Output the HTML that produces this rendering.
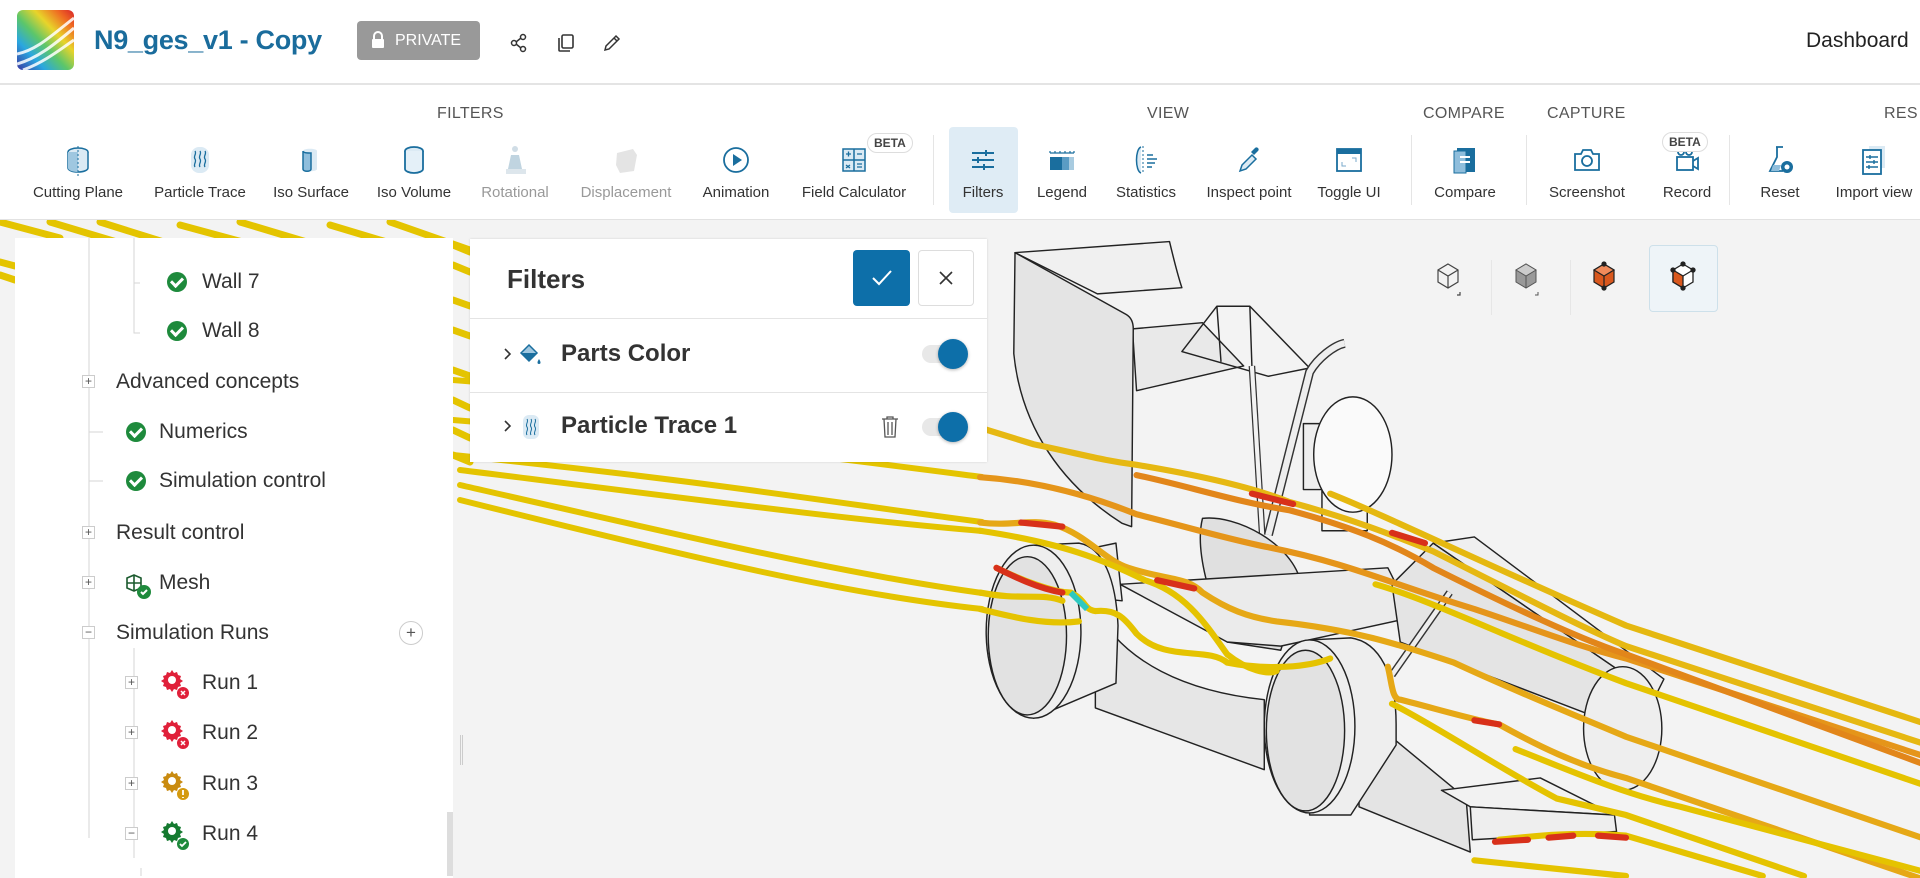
<!DOCTYPE html>
<html><head><meta charset="utf-8">
<style>
*{box-sizing:border-box;margin:0;padding:0}
body{width:1920px;height:876px;overflow:hidden;background:#f3f3f3;font-family:"Liberation Sans",sans-serif;color:#333;position:relative}
.hdr{position:absolute;left:0;top:0;width:1920px;height:85px;background:#fff;border-bottom:2px solid #e4e4e4}
.tb{position:absolute;left:0;top:85px;width:1920px;height:135px;background:#fff;border-bottom:1px solid #e2e2e2}
.sec{position:absolute;top:105px;font-size:16px;color:#555;letter-spacing:.3px}
.it{position:absolute;top:143px;width:120px;margin-left:-60px;text-align:center;font-size:15px;color:#333}
.it svg{display:block;margin:0 auto 7px;width:34px;height:34px}
.it.dis{color:#999}
.sep{position:absolute;top:135px;width:1px;height:70px;background:#e5e5e5}
.beta{position:absolute;font-size:12px;font-weight:bold;color:#444;border:1px solid #ddd;border-radius:10px;padding:2px 6px;background:#fff}
.abs{position:absolute}
.tree{position:absolute;left:15px;top:238px;width:438px;height:640px;background:#fff}
.row{position:absolute;font-size:21px;color:#333;white-space:nowrap;line-height:24px}
.pb{position:absolute;width:13px;height:13px;border:1px solid #ccc;background:#fff;font-size:12px;line-height:11px;text-align:center;color:#555}
.chk{position:absolute;width:20px;height:20px;border-radius:50%;background:#1e8a3c}
.chk:after{content:"";position:absolute;left:6px;top:3px;width:5px;height:9px;border:solid #fff;border-width:0 3px 3px 0;transform:rotate(45deg)}
.fp{position:absolute;left:470px;top:239px;width:517px;height:223px;background:#fff;box-shadow:0 0 2px rgba(0,0,0,.15)}
.tog{position:absolute;width:44px;height:18px;border-radius:9px;background:#e8e8e8}
.tog:after{content:"";position:absolute;right:-2px;top:-6px;width:30px;height:30px;border-radius:50%;background:#0d6fa9;box-shadow:0 1px 3px rgba(0,0,0,.3)}
</style></head><body>

<!-- page-coordinate streamlines -->
<svg class="abs" style="left:0;top:220px" width="1920" height="656" viewBox="0 220 1920 656">
<g stroke="#e4c400" stroke-width="7" fill="none" stroke-linecap="round">
<path d="M0 222 L60 238"/><path d="M50 222 L120 243"/><path d="M100 222 L170 244"/><path d="M180 225 L250 244"/><path d="M240 222 L320 246"/><path d="M330 225 L400 246"/><path d="M390 222 L470 250"/><path d="M0 262 L15 266"/><path d="M0 275 L15 280"/>
<path d="M453 245 L470 252"/><path d="M453 265 L470 272"/><path d="M453 300 L470 306"/><path d="M453 330 L470 336"/><path d="M453 370 L470 376"/><path d="M453 400 L470 408"/><path d="M453 430 L470 438"/><path d="M453 455 L470 462"/>
</g>
<g fill="none" stroke-width="6" stroke-linecap="round" stroke="#e4c400">
<path d="M453 380 C700 400 850 415 982 428"/>
<path d="M453 420 C700 440 850 460 982 477"/>
<path d="M453 455 C700 480 850 505 982 522"/>
<path d="M460 470 C700 500 850 520 982 531"/>
<path d="M460 485 C700 540 850 575 982 593"/>
<path d="M460 500 C700 560 850 595 982 609"/>
</g>
</svg>

<!-- car region, zoom coords (scale 2.427) -->
<svg class="abs" style="left:980px;top:230px;overflow:visible" width="646" height="646" viewBox="0 0 1568 1568">
<g stroke="#222" stroke-width="3.5" fill="#ececec" stroke-linejoin="round">
<path d="M85 55 L460 28 C470 70 480 110 490 140 L285 155 Z" fill="#f0f0f0"/>
<path d="M370 240 L540 225 L640 330 L380 390 Z" fill="#e9e9e9"/>
<path d="M85 55 L355 205 Q372 215 372 240 L368 720 L345 712 C200 620 100 480 82 300 Z" fill="#e4e4e4"/>
<path d="M490 295 L575 185 L655 185 L800 335 L700 355 Z M575 185 L585 320 M655 185 L660 330" fill="none"/>
<path d="M660 330 L685 740" fill="none" stroke="#333" stroke-width="16"/>
<path d="M660 330 L685 740" fill="none" stroke="#f2f2f2" stroke-width="10"/>
<path d="M700 740 L800 345 C820 310 860 280 885 275" fill="none" stroke="#333" stroke-width="22"/>
<path d="M700 740 L800 345 C820 310 860 280 885 275" fill="none" stroke="#eeeeee" stroke-width="15"/>
<rect x="785" y="470" width="45" height="160" fill="#eee"/>
<rect x="830" y="630" width="110" height="100" fill="#f4f4f4"/>
<ellipse cx="905" cy="545" rx="95" ry="140" fill="#fafafa"/>
<path d="M540 700 C620 690 760 760 780 860 L730 1020 L600 1000 C560 900 520 780 540 700Z" fill="#e0e0e0"/>
<path d="M340 860 L990 820 L1050 940 L730 1010 L600 1000 Z" fill="#ebebeb"/>
<path d="M1000 860 L1100 760 L1640 1130 L1620 1230 L1020 1000 Z" fill="#e4e4e4"/>
<path d="M1100 760 L1200 745 L1660 1090 L1640 1130 Z" fill="#efefef"/>
<ellipse cx="1560" cy="1210" rx="95" ry="150" fill="#eeeeee"/>
<path d="M235 780 L330 760 L345 900 L250 890 Z" fill="#eeeeee"/>
<path d="M280 920 C350 1050 500 1120 690 1140 L690 1310 L280 1160 Z" fill="#e6e6e6"/>
<path d="M130 765 L240 760 C300 770 330 850 335 960 L330 1100 L130 1185 Z" fill="#eeeeee"/>
<ellipse cx="130" cy="975" rx="115" ry="210" fill="#eeeeee"/>
<ellipse cx="115" cy="985" rx="95" ry="192" fill="#e2e2e2"/>
<path d="M920 1260 L1010 1240 L1180 1380 L1190 1510 L920 1400 Z" fill="#e4e4e4"/>
<path d="M1120 1360 L1360 1330 L1540 1420 L1190 1400 Z" fill="#f2f2f2"/>
<path d="M1190 1400 L1540 1420 L1545 1460 L1195 1480 Z" fill="#eeeeee"/>
<path d="M800 995 L900 990 C970 1000 1010 1080 1010 1200 L1010 1250 L900 1420 L800 1420 Z" fill="#eeeeee"/>
<ellipse cx="800" cy="1205" rx="110" ry="210" fill="#eeeeee"/>
<ellipse cx="790" cy="1215" rx="95" ry="195" fill="#e2e2e2"/>
<path d="M1000 1080 L1140 880" stroke="#333" stroke-width="18" fill="none"/>
<path d="M1000 1080 L1140 880" stroke="#eee" stroke-width="11" fill="none"/>
</g>
<g fill="none" stroke-width="15" stroke-linecap="round">
<path d="M0 480 L130 520 C250 545 300 560 380 570 C500 590 650 620 750 660 C900 700 1000 740 1100 780 C1300 880 1450 960 1568 1010 L2300 1250" stroke="#e6b812"/>
<path d="M0 600 C150 610 280 650 380 690 C500 720 600 750 700 770 C900 810 1000 860 1200 920 C1350 970 1450 1010 1568 1040 L2300 1280" stroke="#e5951a"/>
<path d="M380 595 C500 620 620 660 750 680 C900 720 1000 760 1100 820 C1300 920 1450 990 1568 1030 L2300 1300" stroke="#e2861a"/>
<path d="M0 710 C80 720 120 700 180 715 C260 740 300 800 360 820 C450 850 500 840 540 880 C600 920 650 940 720 950 C900 970 1000 1000 1150 1050 C1300 1120 1450 1180 1568 1230 L2300 1480" stroke="#e6a816"/>
<path d="M40 820 C100 850 180 880 220 880 C260 900 250 920 280 925 C330 920 350 940 380 980 C450 1050 550 1010 600 1050 C700 1070 800 1060 850 1040" stroke="#e5c300"/>
<path d="M0 730 C200 760 300 800 400 850 C500 880 550 960 600 1030 C650 1070 700 1080 720 1070" stroke="#e5c300"/>
<path d="M990 1060 C1000 1100 1000 1140 1020 1140 C1100 1160 1200 1190 1260 1200 C1350 1250 1450 1300 1568 1330 L2300 1580" stroke="#e6a816"/>
<path d="M1000 1150 C1100 1200 1250 1300 1400 1380 L1568 1420 L2000 1568" stroke="#e5c300"/>
<path d="M1260 1480 C1350 1470 1450 1460 1568 1470 L1900 1568" stroke="#e5c300"/>
<path d="M1200 1530 L1568 1568" stroke="#e5c300"/>
<path d="M960 860 C1100 900 1300 1000 1568 1100 L2300 1350" stroke="#e5c300"/>
<path d="M850 640 C1000 700 1200 800 1568 960 L2300 1200" stroke="#e5b810"/>
<path d="M1300 1260 C1450 1320 1568 1370 1700 1400 L2300 1560" stroke="#e5c300"/>
<path d="M0 880 C100 900 150 880 200 900" stroke="#e5c300"/>
<path d="M0 920 C80 940 160 960 240 950" stroke="#e5c300"/>
</g>
<g fill="none" stroke-width="15" stroke-linecap="round" stroke="#d8301a">
<path d="M40 820 C80 840 140 870 200 880"/><path d="M660 640 L760 665"/><path d="M1000 735 L1080 760"/>
<path d="M1250 1485 L1330 1480"/><path d="M1380 1475 L1440 1470"/><path d="M1500 1470 L1568 1475"/>
<path d="M100 710 L200 720"/><path d="M430 850 L520 870"/><path d="M1200 1190 L1260 1200"/>
</g>
<path d="M220 880 L260 920" stroke="#2ec8c0" stroke-width="14" fill="none"/>
</svg>

<!-- header -->
<div class="hdr"></div>
<svg class="abs" style="left:17px;top:10px" width="57" height="60" viewBox="0 0 57 60">
<defs><linearGradient id="lg" x1="0" y1="1" x2="1" y2="0"><stop offset="0" stop-color="#3a37a0"/><stop offset=".25" stop-color="#2aa7e0"/><stop offset=".45" stop-color="#5cc66a"/><stop offset=".65" stop-color="#e8d42a"/><stop offset=".85" stop-color="#ef6a22"/><stop offset="1" stop-color="#d8232a"/></linearGradient></defs>
<rect width="57" height="60" rx="6" fill="url(#lg)"/>
<path d="M0 44 C20 40 35 25 57 8 M0 54 C22 48 40 32 57 18 M6 60 C28 52 45 38 57 30" stroke="#fff" stroke-width="3" fill="none" opacity=".85"/>
</svg>
<div class="abs" style="left:94px;top:25px;font-size:27px;font-weight:bold;color:#1a6c9c;letter-spacing:-0.3px">N9_ges_v1 - Copy</div>
<div class="abs" style="left:357px;top:21px;width:123px;height:39px;background:#999;border-radius:4px;color:#fff;font-size:16px;line-height:39px;padding-left:38px">PRIVATE</div>
<svg class="abs" style="left:370px;top:31px" width="16" height="18" viewBox="0 0 16 18"><path d="M4 8V5a4 4 0 0 1 8 0v3" stroke="#fff" stroke-width="2" fill="none"/><rect x="2" y="8" width="12" height="9" rx="1" fill="#fff"/></svg>
<svg class="abs" style="left:509px;top:33px" width="20" height="20" viewBox="0 0 20 20" fill="none" stroke="#333" stroke-width="1.5"><circle cx="14" cy="4" r="2.5"/><circle cx="5" cy="10" r="2.5"/><circle cx="14" cy="16" r="2.5"/><path d="M7 9l5-4M7 11l5 4"/></svg>
<svg class="abs" style="left:556px;top:33px" width="20" height="20" viewBox="0 0 20 20" fill="none" stroke="#333" stroke-width="1.6"><rect x="6" y="2" width="11" height="13" rx="1.5"/><path d="M3 5v12a1 1 0 0 0 1 1h10"/></svg>
<svg class="abs" style="left:602px;top:33px" width="20" height="20" viewBox="0 0 20 20" fill="none" stroke="#333" stroke-width="1.5"><path d="M3 17l1-4L14 3l3 3L7 16z M12 5l3 3"/></svg>
<div class="abs" style="left:1806px;top:29px;font-size:21px;color:#222">Dashboard</div>

<!-- toolbar -->
<div class="tb"></div>
<div class="sec" style="left:437px">FILTERS</div>
<div class="sec" style="left:1147px">VIEW</div>
<div class="sec" style="left:1423px">COMPARE</div>
<div class="sec" style="left:1547px">CAPTURE</div>
<div class="sec" style="left:1884px">RES</div>
<div class="abs" style="left:949px;top:127px;width:69px;height:86px;background:#dfecf5;border-radius:4px"></div>
<div class="sep" style="left:933px"></div><div class="sep" style="left:1411px"></div><div class="sep" style="left:1526px"></div><div class="sep" style="left:1729px"></div>

<div class="it" style="left:78px"><svg viewBox="0 0 34 34"><ellipse cx="17" cy="9" rx="10" ry="4" fill="#dbeaf4" stroke="#1a6e9e" stroke-width="1.5"/><path d="M7 9v16c0 2 4 4 10 4s10-2 10-4V9" fill="#dbeaf4" stroke="#1a6e9e" stroke-width="1.5"/><path d="M7 9v16c0 2 4 4 10 4V9" fill="#9fc7e0"/><path d="M17 3v30" stroke="#1a6e9e" stroke-dasharray="2 2"/></svg>Cutting Plane</div>
<div class="it" style="left:200px"><svg viewBox="0 0 34 34"><rect x="8" y="4" width="18" height="26" rx="8" fill="#dbeaf4"/><path d="M12 8c2 3-2 5 0 8s-2 5 0 8M17 8c2 3-2 5 0 8s-2 5 0 8M22 8c2 3-2 5 0 8s-2 5 0 8" stroke="#1a6e9e" fill="none" stroke-width="1.3"/></svg>Particle Trace</div>
<div class="it" style="left:311px"><svg viewBox="0 0 34 34"><path d="M9 8c0-3 14-3 14 0v18c0 3-14 3-14 0z" fill="#dbeaf4"/><path d="M9 8v18c0 3 8 3 8 0V10c-3 0-8 0-8-2z" fill="#8fbedc" stroke="#1a6e9e" stroke-width="1.5"/></svg>Iso Surface</div>
<div class="it" style="left:414px"><svg viewBox="0 0 34 34"><ellipse cx="17" cy="8" rx="9" ry="4" fill="#dbeaf4" stroke="#1a6e9e" stroke-width="1.8"/><path d="M8 8v18c0 2 4 4 9 4s9-2 9-4V8" fill="#e4f0f8" stroke="#1a6e9e" stroke-width="1.8"/></svg>Iso Volume</div>
<div class="it dis" style="left:515px"><svg viewBox="0 0 34 34"><circle cx="17" cy="6" r="3" fill="#d0dde6"/><path d="M10 26l3-14h8l3 14z" fill="#c0d4e0"/><rect x="8" y="26" width="20" height="5" fill="#dde6ec"/></svg>Rotational</div>
<div class="it dis" style="left:626px"><svg viewBox="0 0 34 34"><path d="M8 10l16-4 4 6-3 16-14 2-4-8z" fill="#e4e4e4"/></svg>Displacement</div>
<div class="it" style="left:736px"><svg viewBox="0 0 34 34"><circle cx="17" cy="17" r="12" fill="#fff" stroke="#1a6e9e" stroke-width="1.8"/><path d="M14 11l9 6-9 6z" fill="#1a6e9e"/></svg>Animation</div>
<div class="it" style="left:854px"><svg viewBox="0 0 34 34"><rect x="6" y="6" width="22" height="22" fill="#dbeaf4" stroke="#1a6e9e" stroke-width="1.5"/><path d="M17 6v22M6 17h22" stroke="#1a6e9e" stroke-width="1.5"/><path d="M9 11h5M11.5 8.5v5M20 11h5M9 22l4 3M13 22l-4 3M20 21h5M20 24h5" stroke="#1a6e9e" stroke-width="1.3"/></svg>Field Calculator</div>
<div class="beta" style="left:867px;top:133px">BETA</div>
<div class="it" style="left:983px"><svg viewBox="0 0 34 34" stroke="#1a6e9e" stroke-width="2"><path d="M6 10h22M6 17h22M6 24h22"/><path d="M20 7v6M12 14v6M18 21v6"/></svg>Filters</div>
<div class="it" style="left:1062px"><svg viewBox="0 0 34 34"><path d="M5 10h24M5 8v2M10 8v2M15 8v2M20 8v2M25 8v2M29 8v2" stroke="#1a6e9e" stroke-width="1.2"/><rect x="5" y="14" width="24" height="13" fill="#1a6e9e"/><rect x="17" y="14" width="12" height="13" fill="#5a9cc4"/><rect x="24" y="14" width="5" height="13" fill="#a8cbe0"/></svg>Legend</div>
<div class="it" style="left:1146px"><svg viewBox="0 0 34 34"><path d="M12 4c-6 2-6 24 0 26" fill="#dbeaf4" stroke="#1a6e9e" stroke-width="1.5"/><path d="M14 3v28" stroke="#1a6e9e" stroke-dasharray="2 2"/><path d="M18 12h6M18 16h10M18 20h8M18 24h5" stroke="#1a6e9e" stroke-width="1.5"/></svg>Statistics</div>
<div class="it" style="left:1249px"><svg viewBox="0 0 34 34"><path d="M8 28l2-6 10-10 4 4-10 10z" fill="#dbeaf4" stroke="#1a6e9e" stroke-width="1.5"/><path d="M19 9l4-4c2-2 5 1 3 3l-4 4z" fill="#1a6e9e"/></svg>Inspect point</div>
<div class="it" style="left:1349px"><svg viewBox="0 0 34 34"><rect x="5" y="6" width="24" height="22" fill="#fff" stroke="#1a6e9e" stroke-width="1.8"/><rect x="5" y="6" width="24" height="5" fill="#1a6e9e"/><path d="M10 19v4h4M24 19v-4h-4" stroke="#7aaacb" fill="none"/></svg>Toggle UI</div>
<div class="it" style="left:1465px"><svg viewBox="0 0 34 34"><rect x="9" y="5" width="18" height="24" fill="#1a6e9e"/><rect x="6" y="8" width="12" height="22" fill="#8fbedc" stroke="#1a6e9e"/><path d="M12 14h10M12 19h10" stroke="#fff" stroke-width="2"/></svg>Compare</div>
<div class="it" style="left:1587px"><svg viewBox="0 0 34 34" fill="none" stroke="#1a6e9e" stroke-width="1.8"><path d="M5 11h6l2-4h8l2 4h6v16H5z"/><circle cx="17" cy="18" r="5"/></svg>Screenshot</div>
<div class="it" style="left:1687px"><svg viewBox="0 0 34 34" fill="none" stroke="#1a6e9e" stroke-width="1.8"><rect x="7" y="14" width="16" height="13"/><path d="M23 18l5-3v11l-5-3"/><circle cx="11" cy="9" r="3"/><circle cx="19" cy="9" r="3"/></svg>Record</div>
<div class="beta" style="left:1662px;top:132px">BETA</div>
<div class="it" style="left:1780px"><svg viewBox="0 0 34 34"><path d="M13 4h7M14 4v10l-7 14h13" fill="none" stroke="#1a6e9e" stroke-width="1.8"/><path d="M10 22h8l-2 6H8z" fill="#8fbedc"/><circle cx="24" cy="24" r="6" fill="#1a6e9e"/><circle cx="24" cy="24" r="2.5" fill="#fff"/></svg>Reset</div>
<div class="it" style="left:1874px"><svg viewBox="0 0 34 34"><rect x="12" y="3" width="16" height="22" fill="#dbeaf4"/><rect x="6" y="7" width="18" height="24" fill="#fff" stroke="#1a6e9e" stroke-width="1.8"/><path d="M9 14h12M9 19h12M9 24h12M13 12v4M17 17v4M12 22v4" stroke="#1a6e9e" stroke-width="1.4"/></svg>Import view</div>

<!-- tree -->
<div class="tree"></div>
<svg class="abs" style="left:15px;top:238px" width="438" height="638">
<g stroke="#d6d6d6" stroke-width="1" fill="none">
<path d="M74 0V600"/><path d="M119 0V95 H125"/><path d="M119 45H125"/>
<path d="M74 194H88M74 243H88"/><path d="M119 410V620"/><path d="M126 630V640"/>
</g>
<rect x="432" y="574" width="6" height="64" fill="#ddd"/>
</svg>
<div class="chk" style="left:167px;top:218px;clip-path:inset(20px 0 0 0)"></div>
<div class="chk" style="left:167px;top:272px"></div><div class="row" style="left:202px;top:270px">Wall 7</div>
<div class="chk" style="left:167px;top:321px"></div><div class="row" style="left:202px;top:319px">Wall 8</div>
<div class="pb" style="left:82px;top:375px">+</div><div class="row" style="left:116px;top:370px">Advanced concepts</div>
<div class="chk" style="left:126px;top:422px"></div><div class="row" style="left:159px;top:420px">Numerics</div>
<div class="chk" style="left:126px;top:471px"></div><div class="row" style="left:159px;top:469px">Simulation control</div>
<div class="pb" style="left:82px;top:526px">+</div><div class="row" style="left:116px;top:521px">Result control</div>
<div class="pb" style="left:82px;top:576px">+</div>
<svg class="abs" style="left:122px;top:570px" width="32" height="32" viewBox="0 0 32 32"><path d="M5 8l7-3 7 3v10l-7 3-7-3z M12 5v16 M5 13h14" fill="none" stroke="#1b5a2e" stroke-width="1.6"/><circle cx="22" cy="22" r="7" fill="#1e8a3c"/><path d="M19 22l2 2 4-4" stroke="#fff" stroke-width="2" fill="none"/></svg>
<div class="row" style="left:159px;top:571px">Mesh</div>
<div class="pb" style="left:82px;top:626px">−</div><div class="row" style="left:116px;top:621px">Simulation Runs</div>
<div class="abs" style="left:399px;top:621px;width:24px;height:24px;border:1px solid #ccc;border-radius:50%;text-align:center;line-height:21px;font-size:17px;color:#555">+</div>
<svg width="0" height="0" style="position:absolute"><defs><path id="gear" d="M12 2l2 3 3-1 1 3 3 1-1 3 3 2-3 2 1 3-3 1-1 3-3-1-2 3-2-3-3 1-1-3-3-1 1-3-3-2 3-2-1-3 3-1 1-3 3 1z"/></defs></svg>
<div class="pb" style="left:125px;top:676px">+</div>
<svg class="abs" style="left:160px;top:668px" width="36" height="36" viewBox="0 0 36 36"><use href="#gear" fill="#e0203a"/><circle cx="12" cy="12" r="4" fill="#fff"/><circle cx="23" cy="25" r="6" fill="#e0203a"/><path d="M21 23l4 4M25 23l-4 4" stroke="#fff" stroke-width="1.5"/></svg>
<div class="row" style="left:202px;top:671px">Run 1</div>
<div class="pb" style="left:125px;top:726px">+</div>
<svg class="abs" style="left:160px;top:718px" width="36" height="36" viewBox="0 0 36 36"><use href="#gear" fill="#e0203a"/><circle cx="12" cy="12" r="4" fill="#fff"/><circle cx="23" cy="25" r="6" fill="#e0203a"/><path d="M21 23l4 4M25 23l-4 4" stroke="#fff" stroke-width="1.5"/></svg>
<div class="row" style="left:202px;top:721px">Run 2</div>
<div class="pb" style="left:125px;top:777px">+</div>
<svg class="abs" style="left:160px;top:769px" width="36" height="36" viewBox="0 0 36 36"><use href="#gear" fill="#c98b10"/><circle cx="12" cy="12" r="4" fill="#fff"/><circle cx="23" cy="25" r="6" fill="#d49a10"/><path d="M23 21v5M23 28v1" stroke="#fff" stroke-width="1.8"/></svg>
<div class="row" style="left:202px;top:772px">Run 3</div>
<div class="pb" style="left:125px;top:827px">−</div>
<svg class="abs" style="left:160px;top:819px" width="36" height="36" viewBox="0 0 36 36"><use href="#gear" fill="#157a30"/><circle cx="12" cy="12" r="4" fill="#fff"/><circle cx="23" cy="25" r="6" fill="#1e8a3c"/><path d="M20 25l2 2 4-4" stroke="#fff" stroke-width="1.8" fill="none"/></svg>
<div class="row" style="left:202px;top:822px">Run 4</div>
<div class="abs" style="left:460px;top:735px;width:3px;height:30px;border-left:1px solid #ccc;border-right:1px solid #ccc"></div>

<!-- filters panel -->
<div class="fp">
<div class="abs" style="left:37px;top:25px;font-size:26px;font-weight:bold;color:#333">Filters</div>
<div class="abs" style="left:383px;top:11px;width:57px;height:56px;background:#0d6fa9;border-radius:4px"></div>
<svg class="abs" style="left:400px;top:28px" width="24" height="22"><path d="M3 11l6 6L21 4" stroke="#fff" stroke-width="2" fill="none"/></svg>
<div class="abs" style="left:448px;top:11px;width:56px;height:56px;border:1px solid #ddd;border-radius:4px"></div>
<svg class="abs" style="left:469px;top:32px" width="14" height="14"><path d="M1 1l12 12M13 1L1 13" stroke="#333" stroke-width="1.6"/></svg>
<div class="abs" style="left:0;top:79px;width:517px;height:1px;background:#e4e4e4"></div>
<div class="abs" style="left:0;top:153px;width:517px;height:1px;background:#e4e4e4"></div>
<svg class="abs" style="left:33px;top:108px" width="10" height="14"><path d="M2 2l5 5-5 5" stroke="#333" stroke-width="1.6" fill="none"/></svg>
<svg class="abs" style="left:48px;top:102px" width="26" height="28" viewBox="0 0 26 28"><path d="M3 12l8-8 8 8-8 8z" fill="#9fc7e0" stroke="#1a6e9e" stroke-width="1.5"/><path d="M3 12h16l-8 8z" fill="#1a6e9e"/><path d="M21 18c-2 3-2 5 0 5s2-2 0-5z" fill="#1a6e9e"/></svg>
<div class="abs" style="left:91px;top:101px;font-size:24px;font-weight:bold;color:#333">Parts Color</div>
<div class="tog" style="left:452px;top:106px"></div>
<svg class="abs" style="left:33px;top:180px" width="10" height="14"><path d="M2 2l5 5-5 5" stroke="#333" stroke-width="1.6" fill="none"/></svg>
<svg class="abs" style="left:51px;top:175px" width="22" height="26" viewBox="0 0 22 26"><rect x="2" y="1" width="16" height="24" rx="6" fill="#dbeaf4"/><path d="M6 5c2 3-2 5 0 8s-2 5 0 8M10 5c2 3-2 5 0 8s-2 5 0 8M14 5c2 3-2 5 0 8s-2 5 0 8" stroke="#1a6e9e" fill="none" stroke-width="1"/></svg>
<div class="abs" style="left:91px;top:173px;font-size:24px;font-weight:bold;color:#333">Particle Trace 1</div>
<svg class="abs" style="left:410px;top:176px" width="20" height="24" viewBox="0 0 20 24" fill="none" stroke="#555" stroke-width="1.3"><path d="M2 4h16M7 4V2h6v2M4 4l1 18h10l1-18M8 7v13M12 7v13"/></svg>
<div class="tog" style="left:452px;top:179px"></div>
</div>

<!-- view cube buttons -->
<svg class="abs" style="left:1428px;top:256px" width="40" height="50" viewBox="0 0 40 50" fill="none" stroke="#444" stroke-width="1.2"><path d="M20 8l10 6v12l-10 6-10-6V14z M10 14l10 6 10-6 M20 20v12"/><path d="M32 36v3h-3"/></svg>
<div class="abs" style="left:1491px;top:260px;width:1px;height:55px;background:#e6e6e6"></div>
<svg class="abs" style="left:1506px;top:256px" width="40" height="50" viewBox="0 0 40 50" stroke="#555" stroke-width="1"><path d="M20 8l10 6v12l-10 6-10-6V14z" fill="#999"/><path d="M10 14l10 6 10-6-10-6z" fill="#ccc"/><path d="M20 20v12" /><path d="M32 36v3h-3" fill="none"/></svg>
<div class="abs" style="left:1570px;top:260px;width:1px;height:55px;background:#e6e6e6"></div>
<svg class="abs" style="left:1584px;top:256px" width="40" height="50" viewBox="0 0 40 50" stroke="#222" stroke-width="1.2"><path d="M20 8l10 6v12l-10 6-10-6V14z" fill="#d9581e"/><path d="M10 14l10 6 10-6-10-6z" fill="#f08a5a"/><path d="M20 20v12"/><circle cx="20" cy="8" r="2" fill="#222"/><circle cx="20" cy="32" r="2" fill="#222"/></svg>
<div class="abs" style="left:1649px;top:245px;width:69px;height:67px;border:1px solid #cde0ea;border-radius:4px;background:#eef4f8"></div>
<svg class="abs" style="left:1663px;top:256px" width="40" height="50" viewBox="0 0 40 50" stroke="#222" stroke-width="1.3"><path d="M20 8l10 6v12l-10 6-10-6V14z" fill="#fff"/><path d="M10 14l10 6v12l-10-6z" fill="#d9581e"/><path d="M20 20l10-6"/><circle cx="20" cy="8" r="2" fill="#222"/><circle cx="20" cy="32" r="2" fill="#222"/><circle cx="10" cy="14" r="2" fill="#222"/><circle cx="30" cy="14" r="2" fill="#222"/></svg>
</body></html>
